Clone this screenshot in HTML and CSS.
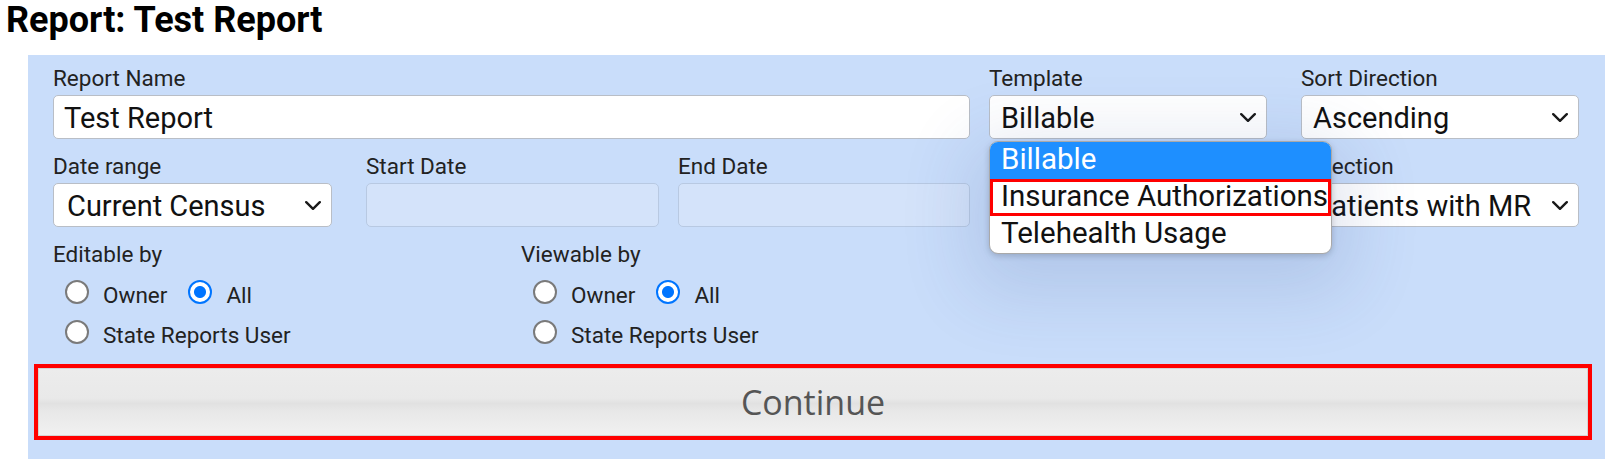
FILE: index.html
```html
<!DOCTYPE html>
<html lang="en">
<head>
<meta charset="utf-8">
<title>Report: Test Report</title>
<link rel="stylesheet" href="styles.css">
</head>
<body>
<h1 class="title">Report: Test Report</h1>
<div class="panel">
  <div class="grid">
    <div class="field f-name">
      <div class="lbl">Report Name</div>
      <div class="control">Test Report</div>
    </div>
    <div class="field f-c7 has-menu">
      <div class="lbl">Template</div>
      <div class="control select"><span>Billable</span><svg class="chev" viewBox="0 0 16 9" width="16" height="9"><path d="M1.2 1.2 8 7.8 14.8 1.2"/></svg></div>
      <div class="menu">
        <div class="opt-item active">Billable</div>
        <div class="opt-item marked">Insurance Authorizations</div>
        <div class="opt-item">Telehealth Usage</div>
      </div>
    </div>
    <div class="field f-c9">
      <div class="lbl">Sort Direction</div>
      <div class="control select"><span>Ascending</span><svg class="chev" viewBox="0 0 16 9" width="16" height="9"><path d="M1.2 1.2 8 7.8 14.8 1.2"/></svg></div>
    </div>

    <div class="field f-c1">
      <div class="lbl">Date range</div>
      <div class="control select wide-pad"><span>Current Census</span><svg class="chev" viewBox="0 0 16 9" width="16" height="9"><path d="M1.2 1.2 8 7.8 14.8 1.2"/></svg></div>
    </div>
    <div class="field f-c3">
      <div class="lbl">Start Date</div>
      <div class="control disabled"></div>
    </div>
    <div class="field f-c5">
      <div class="lbl">End Date</div>
      <div class="control disabled"></div>
    </div>
    <div class="field f-c7">
      <div class="lbl lbl-empty"></div>
      <div class="control"></div>
    </div>
    <div class="field f-c9">
      <div class="lbl">Selection</div>
      <div class="control select"><span>Patients with MR</span><svg class="chev" viewBox="0 0 16 9" width="16" height="9"><path d="M1.2 1.2 8 7.8 14.8 1.2"/></svg></div>
    </div>
  </div>

  <div class="perms">
    <div class="group">
      <div class="lbl">Editable by</div>
      <div class="radio-line">
        <label class="opt"><input class="radio" type="radio" name="edit"><span>Owner</span></label><label class="opt"><input class="radio" type="radio" name="edit" checked><span>All</span></label>
      </div>
      <div class="radio-line">
        <label class="opt"><input class="radio" type="radio" name="edit"><span>State Reports User</span></label>
      </div>
    </div>
    <div class="group">
      <div class="lbl">Viewable by</div>
      <div class="radio-line">
        <label class="opt"><input class="radio" type="radio" name="view"><span>Owner</span></label><label class="opt"><input class="radio" type="radio" name="view" checked><span>All</span></label>
      </div>
      <div class="radio-line">
        <label class="opt"><input class="radio" type="radio" name="view"><span>State Reports User</span></label>
      </div>
    </div>
  </div>

  <button class="continue" type="button">Continue</button>
</div>
</body>
</html>
```

FILE: styles.css
```css
html, body {
  margin: 0;
  padding: 0;
  background: #ffffff;
  overflow: hidden;
}

body {
  padding-left: 6px;
  font-family: Roboto, "Liberation Sans", Arial, sans-serif;
  color: #222222;
}

.title {
  margin: 0 0 15px 0;
  font-family: Roboto, "Liberation Sans", sans-serif;
  font-weight: 700;
  font-size: 36px;
  line-height: 40px;
  color: #000000;
}

.panel {
  margin-left: 22px;
  background: #c9ddfa;
  padding: 10px 26px 23px 25px;
}

.grid {
  display: grid;
  grid-template-columns: 279px 34px 293px 19px 292px 19px 278px 34px 278px;
  row-gap: 14px;
}

.field {
  min-width: 0;
}

.f-name { grid-column: 1 / 6; }
.f-c1 { grid-column: 1; }
.f-c3 { grid-column: 3; }
.f-c5 { grid-column: 5; }
.f-c7 { grid-column: 7; }
.f-c9 { grid-column: 9; }

.has-menu {
  position: relative;
  z-index: 5;
}

.lbl {
  font-size: 22.5px;
  line-height: 26px;
  color: #222222;
  margin-bottom: 4px;
  white-space: nowrap;
}

.lbl-empty {
  height: 26px;
}

.control {
  box-sizing: border-box;
  height: 44px;
  background: #ffffff;
  border: 1px solid #b9bec6;
  border-radius: 5px;
  padding: 2px 10px 0 10px;
  font-size: 29px;
  line-height: 40px;
  color: #111111;
  white-space: nowrap;
  overflow: hidden;
}

.select {
  display: flex;
  align-items: center;
  justify-content: space-between;
  padding-left: 11px;
  padding-right: 10px;
}

.wide-pad {
  padding-left: 13px;
}

.select span {
  overflow: hidden;
}

.chev {
  flex: none;
  margin-top: -2px;
}

.chev path {
  fill: none;
  stroke: #1a1a1a;
  stroke-width: 2.4;
  stroke-linecap: round;
  stroke-linejoin: round;
}

.disabled {
  background: #d4e3fa;
  border-color: #b8c9e2;
}

.menu {
  position: absolute;
  left: 0;
  top: calc(100% + 2px);
  width: 343px;
  box-sizing: border-box;
  background: #ffffff;
  border: 1px solid #a9a9a9;
  border-radius: 9px;
  overflow: hidden;
  box-shadow: 0 20px 70px 20px rgba(40, 70, 140, 0.14), 0 2px 6px rgba(0, 0, 0, 0.18);
}

.opt-item {
  height: 37px;
  line-height: 34px;
  padding-left: 11px;
  font-size: 29.5px;
  color: #111111;
  white-space: nowrap;
}

.opt-item.active {
  background: #1e8fff;
  color: #ffffff;
}

.opt-item.marked {
  outline: 3px solid #ff0000;
  outline-offset: -3px;
}

.perms {
  display: flex;
  margin-top: 14px;
}

.group {
  width: 468px;
}

.group .lbl {
  margin-bottom: 8px;
}

.radio-line {
  padding-left: 12px;
  font-size: 22.5px;
  line-height: 40px;
  white-space: nowrap;
}

.opt {
  color: #222222;
}

.opt + .opt {
  margin-left: 21px;
}

.radio {
  -webkit-appearance: none;
  appearance: none;
  box-sizing: border-box;
  width: 24px;
  height: 24px;
  margin: 0 14px -1px 0;
  vertical-align: baseline;
  border: 2px solid #7a7a7a;
  border-radius: 50%;
  background: #ffffff;
}

.radio:checked {
  border-color: #0075ff;
  background: radial-gradient(circle, #0075ff 0 5.5px, #ffffff 6.5px);
}

.continue {
  display: block;
  box-sizing: border-box;
  width: calc(100% + 24px);
  height: 68px;
  margin: 13px -9px 0 -15px;
  border: 1px solid #d4d4d4;
  outline: 4px solid #ff0000;
  background: linear-gradient(#ececec 0%, #e9e9e9 44%, #e1e1e1 52%, #e8e8e8 64%, #f1f1f1 100%);
  font-family: "Open Sans", "DejaVu Sans", sans-serif;
  font-size: 34px;
  color: #555555;
  padding: 0;
}
```
